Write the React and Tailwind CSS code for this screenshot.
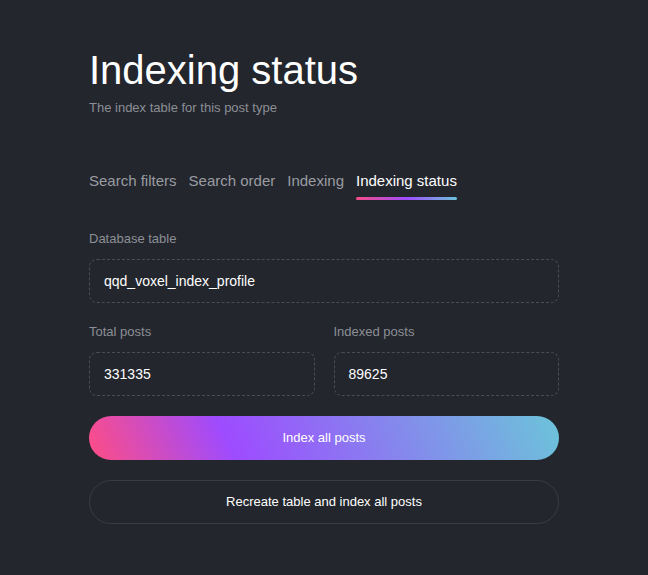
const tabs = ["Search filters", "Search order", "Indexing", "Indexing status"];

function Field({ label, value }) {
  return (
    <div className="flex flex-col">
      <label className="text-[13px] leading-[20px] text-[#8c8f95]">{label}</label>
      <div className="mt-[10px] h-[44px] flex items-center px-[14px] rounded-[8px] border border-dashed border-[#4a4d54] text-[14px] text-white">
        {value}
      </div>
    </div>
  );
}

export default function App() {
  return (
    <div
      className="min-h-screen bg-[#23262d] pt-[46px]"
      style={{ fontFamily: '"Liberation Sans", Arial, sans-serif' }}
    >
      <div className="w-[470px] mx-auto">
        <h1 className="text-[40px] leading-[48px] text-white">Indexing status</h1>
        <p className="mt-1 text-[13px] leading-[20px] text-[#8c8f95]">The index table for this post type</p>

        {/* Tabs */}
        <div className="mt-[53px] flex gap-[12px]">
          {tabs.map((tab) => {
            const active = tab === "Indexing status";
            return (
              <div key={tab} className="flex flex-col">
                <span className={"text-[15px] leading-[20px] " + (active ? "text-white" : "text-[#9a9ca2]")}>
                  {tab}
                </span>
                <span
                  className={
                    "mt-[6px] h-[3px] rounded-full " +
                    (active ? "bg-[linear-gradient(90deg,#f54c86,#a04cff_50%,#6cc4da)]" : "bg-transparent")
                  }
                />
              </div>
            );
          })}
        </div>

        <div className="mt-[29px]">
          <Field label="Database table" value="qqd_voxel_index_profile" />
        </div>

        <div className="mt-[19px] grid grid-cols-2 gap-[19px]">
          <Field label="Total posts" value="331335" />
          <Field label="Indexed posts" value="89625" />
        </div>

        <button className="mt-[20px] w-full h-[44px] rounded-full text-[13px] text-white bg-[linear-gradient(66deg,#ff4d84_0%,#9e4bff_30%,#6cc4da_100%)]">
          Index all posts
        </button>

        <button className="mt-[20px] w-full h-[44px] rounded-full text-[13px] text-white border border-[#393c43]">
          Recreate table and index all posts
        </button>
      </div>
    </div>
  );
}
